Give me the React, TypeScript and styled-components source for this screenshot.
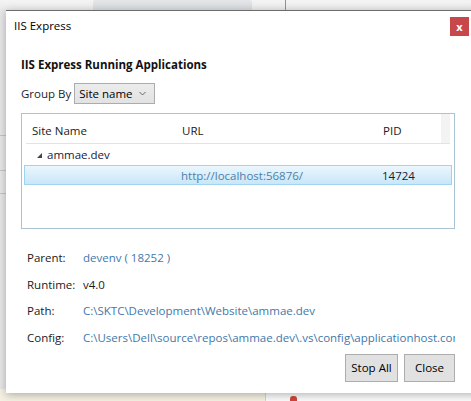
import styled, { createGlobalStyle } from 'styled-components';

const GlobalStyle = createGlobalStyle`
    html, body {
        margin: 0;
        padding: 0;
        background: #f0f0f0;
    }
    body {
        font-family: 'Open Sans', 'Noto Sans', 'Liberation Sans', sans-serif;
        -webkit-font-smoothing: antialiased;
    }
`;

const Desktop = styled.div`
    position: relative;
    width: 471px;
    height: 401px;
    overflow: hidden;
    background: #f0f0f0;
`;

const TopStrip = styled.div`
    display: flex;
    height: 10px;
    background: linear-gradient(#f4f4f4, #e9e9e9);
`;

const BgTab = styled.div`
    margin-left: 93px;
    width: 159px;
    background: linear-gradient(#e4e6e8, #d6d9dc);
    border-radius: 2px 2px 0 0;
`;

const OrangeLine = styled.div`
    margin-left: 33px;
    width: 1px;
    background: #e07a3c;
`;

const BottomStrip = styled.div`
    position: absolute;
    left: 0;
    right: 0;
    bottom: 0;
    height: 12px;
    display: flex;
`;

const BeigePart = styled.div`
    width: 265px;
    background: #f4f0e2;
    border-right: 1px solid #d8d4c8;
`;

const WhitePart = styled.div`
    flex: 1;
    background: #fbfbfb;
    display: flex;
    align-items: flex-end;
    padding-left: 24px;
`;

const RedDot = styled.div`
    width: 7px;
    height: 5px;
    border-radius: 3px 3px 0 0;
    background: #d0453a;
`;

const LeftStrip = styled.div`
    position: absolute;
    left: 0;
    top: 10px;
    width: 6px;
    height: 382px;
    background: #e6e6e6;
`;

const StripMark = styled.div<{ $top: number }>`
    position: absolute;
    left: 0;
    top: ${(p) => p.$top}px;
    width: 6px;
    height: 1px;
    background: #c4c4c4;
`;

const Dialog = styled.div`
    position: absolute;
    left: 6px;
    top: 10px;
    width: 480px;
    height: 382px;
    background: #ffffff;
    border-top: 1px solid #6d6d6d;
    box-shadow: 0 2px 8px rgba(0, 0, 0, 0.28);
    display: flex;
    flex-direction: column;
    font-size: 11.5px;
    color: #1e1e1e;
`;

const TitleBar = styled.div`
    display: flex;
    align-items: center;
    justify-content: space-between;
    height: 29px;
    padding: 0 0 0 8px;
    font-size: 11.5px;
    color: #000;
`;

const CloseX = styled.div`
    width: 19px;
    height: 19px;
    margin-right: 17px;
    margin-top: 2px;
    background: #c8474b;
    color: #fff;
    font-size: 11px;
    font-weight: 700;
    display: flex;
    align-items: center;
    justify-content: center;
    line-height: 1;
`;

const Body = styled.div`
    flex: 1;
    display: flex;
    flex-direction: column;
    padding: 0 0 0 15px;
    width: 434px;
`;

const Heading = styled.div`
    font-weight: 700;
    font-size: 11.5px;
    margin-top: 17px;
    color: #111;
`;

const GroupRow = styled.div`
    display: flex;
    align-items: center;
    margin-top: 11px;
    gap: 3px;
`;

const Select = styled.div`
    display: flex;
    align-items: center;
    justify-content: space-between;
    box-sizing: border-box;
    width: 81px;
    height: 21px;
    padding: 0 8px 0 4px;
    background: linear-gradient(#ececec, #e2e2e2);
    border: 1px solid #acacac;
    color: #000;
`;

const Chevron = styled.svg`
    width: 7px;
    height: 5px;
`;

const ListBox = styled.div`
    margin-top: 9px;
    box-sizing: border-box;
    height: 116px;
    border: 1px solid #abc4d3;
    padding: 0 2px;
    overflow: hidden;
`;

const Grid = styled.div`
    display: grid;
    grid-template-columns: 156px 201px 1fr;
`;

const HeaderRow = styled(Grid)`
    box-sizing: border-box;
    height: 30px;
    padding-top: 4px;
    align-items: center;
    border-bottom: 1px solid #e3e3e3;
    margin: 0 2px;
    background: linear-gradient(90deg, #fff 0, #fff 415px, #f3f3f3 415px);
    color: #1a1a1a;
`;

const HeaderCell = styled.div<{ $pad: number }>`
    padding-left: ${(p) => p.$pad}px;
`;

const GroupLine = styled.div`
    height: 21px;
    display: flex;
    align-items: center;
    padding-left: 13px;
    gap: 5px;
    color: #1a1a3a;
`;

const Triangle = styled.svg`
    width: 5px;
    height: 5px;
    margin-top: 2px;
`;

const SelectedRow = styled(Grid)`
    height: 20px;
    align-items: center;
    box-sizing: border-box;
    border: 1px solid #9fd3ef;
    background: linear-gradient(#ebf6fd, #c9e6f8);
`;

const Cell = styled.div<{ $link?: boolean }>`
    color: ${(p) => (p.$link ? '#4c7fa9' : '#1a1a3a')};
`;

const Details = styled.div`
    margin-top: 15px;
    display: grid;
    grid-template-columns: 56px 1fr;
    grid-auto-rows: 26.7px;
    align-items: center;
    padding-left: 6px;
`;

const Label = styled.div`
    color: #1a1a1a;
`;

const Value = styled.div<{ $link?: boolean }>`
    color: ${(p) => (p.$link ? '#3f78aa' : '#1a1a1a')};
    white-space: nowrap;
    overflow: hidden;
`;

const Footer = styled.div`
    display: flex;
    justify-content: flex-end;
    gap: 6px;
    margin-top: 3px;
`;

const Button = styled.button<{ $w: number }>`
    box-sizing: border-box;
    width: ${(p) => p.$w}px;
    height: 28px;
    background: #e1e1e1;
    border: 1px solid #adadad;
    font-family: inherit;
    font-size: 11.5px;
    color: #000;
    padding: 0;
`;

export default function App() {
    return (
        <>
            <GlobalStyle />
            <Desktop>
                <TopStrip>
                    <BgTab />
                    <OrangeLine />
                </TopStrip>
                <LeftStrip>
                    <StripMark $top={125} />
                    <StripMark $top={160} />
                    <StripMark $top={183} />
                </LeftStrip>
                <BottomStrip>
                    <BeigePart />
                    <WhitePart>
                        <RedDot />
                    </WhitePart>
                </BottomStrip>
                <Dialog>
                    <TitleBar>
                        <span>IIS Express</span>
                        <CloseX>x</CloseX>
                    </TitleBar>
                    <Body>
                        <Heading>IIS Express Running Applications</Heading>
                        <GroupRow>
                            <span>Group By</span>
                            <Select>
                                <span>Site name</span>
                                <Chevron viewBox="0 0 7 5">
                                    <path d="M0.5 1 L3.5 4 L6.5 1" fill="none" stroke="#666" strokeWidth="1" />
                                </Chevron>
                            </Select>
                        </GroupRow>
                        <ListBox>
                            <HeaderRow>
                                <HeaderCell $pad={6}>Site Name</HeaderCell>
                                <HeaderCell $pad={0}>URL</HeaderCell>
                                <HeaderCell $pad={0}>PID</HeaderCell>
                            </HeaderRow>
                            <GroupLine>
                                <Triangle viewBox="0 0 5 5">
                                    <path d="M5 0 L5 5 L0 5 Z" fill="#444" />
                                </Triangle>
                                <span>ammae.dev</span>
                            </GroupLine>
                            <SelectedRow>
                                <Cell />
                                <Cell $link>http://localhost:56876/</Cell>
                                <Cell>14724</Cell>
                            </SelectedRow>
                        </ListBox>
                        <Details>
                            <Label>Parent:</Label>
                            <Value $link>devenv ( 18252 )</Value>
                            <Label>Runtime:</Label>
                            <Value>v4.0</Value>
                            <Label>Path:</Label>
                            <Value $link>C:\SKTC\Development\Website\ammae.dev</Value>
                            <Label>Config:</Label>
                            <Value $link>C:\Users\Dell\source\repos\ammae.dev\.vs\config\applicationhost.config</Value>
                        </Details>
                        <Footer>
                            <Button $w={53}>Stop All</Button>
                            <Button $w={51}>Close</Button>
                        </Footer>
                    </Body>
                </Dialog>
            </Desktop>
        </>
    );
}
